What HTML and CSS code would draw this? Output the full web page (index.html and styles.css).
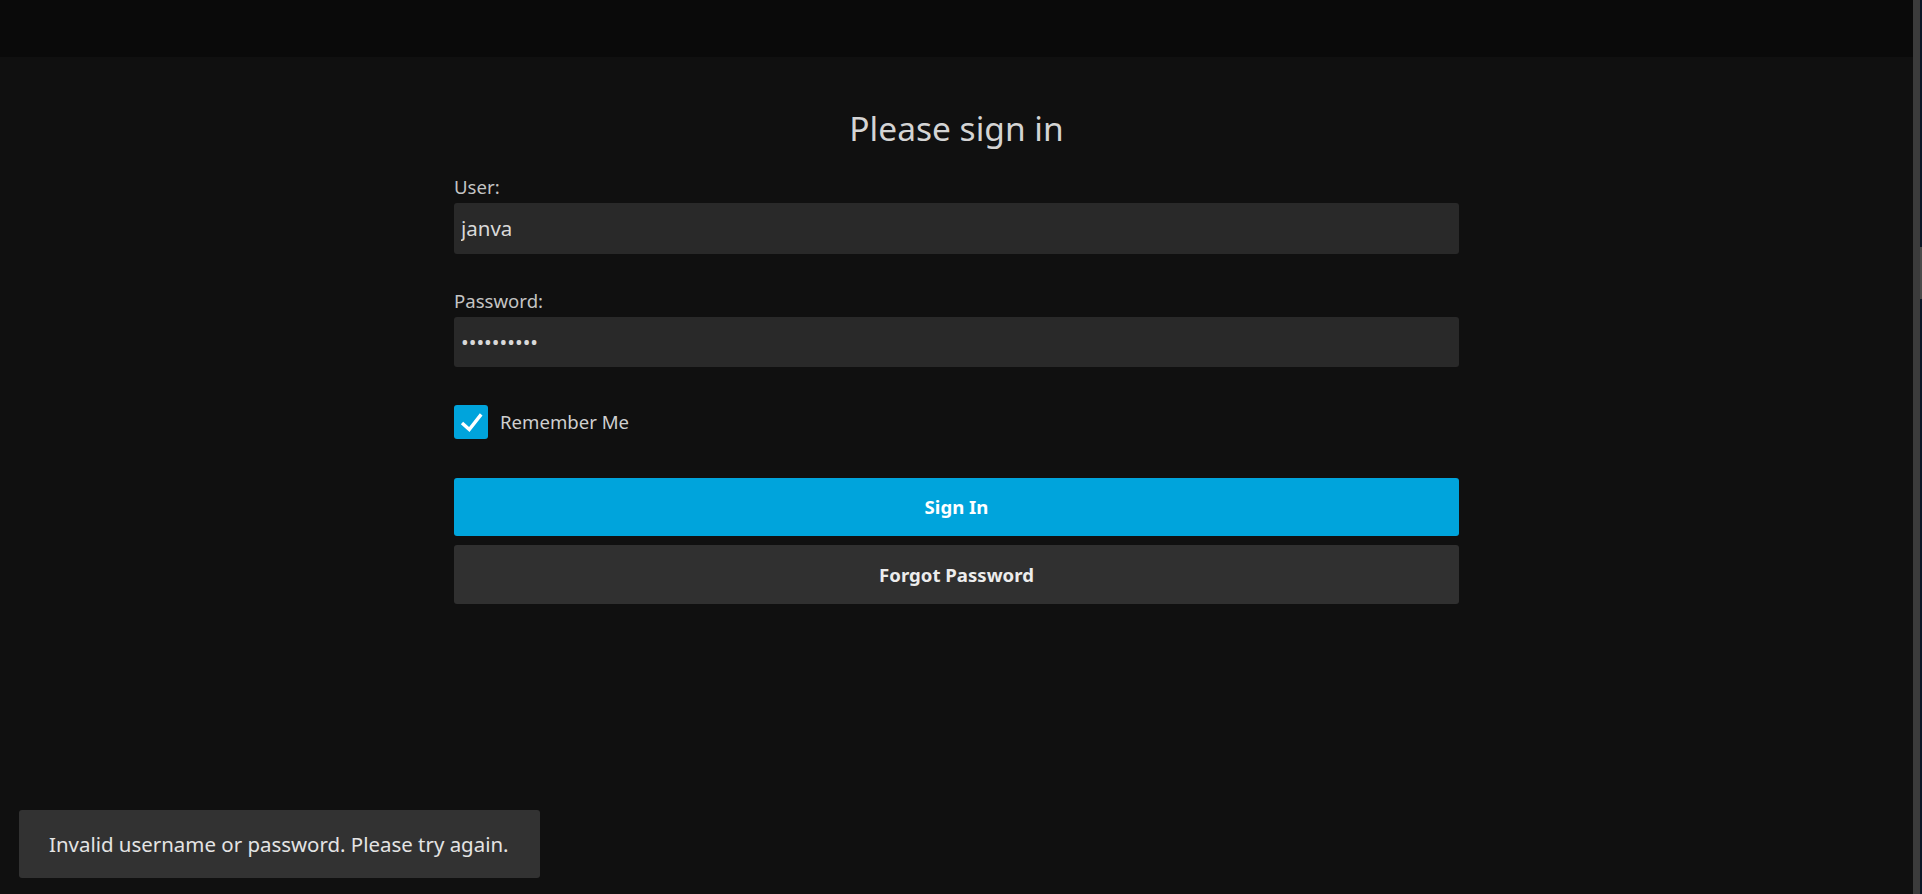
FILE: index.html
```html
<!DOCTYPE html>
<html lang="en">
<head>
<meta charset="utf-8">
<title>Please sign in</title>
<link rel="stylesheet" href="styles.css">
</head>
<body>
<div class="app">
  <div class="page">
    <header class="top-bar"></header>
    <main class="content">
      <form class="login" onsubmit="return false">
        <h1 class="title">Please sign in</h1>
        <div class="field">
          <label class="field-label" for="user">User:</label>
          <input class="field-input" id="user" type="text" value="janva">
        </div>
        <div class="field">
          <label class="field-label" for="pw">Password:</label>
          <input class="field-input" id="pw" type="password" value="abcdefghij">
        </div>
        <label class="remember">
          <span class="check-box">
            <svg viewBox="0 0 34 34" width="34" height="34"><path d="M8 18 L15.3 24.6 L27.2 9.4" fill="none" stroke="#fff" stroke-width="3.4" stroke-linejoin="miter" stroke-linecap="butt"/></svg>
          </span>
          <span class="remember-text">Remember Me</span>
        </label>
        <div class="actions">
          <button class="btn btn-primary" type="submit">Sign In</button>
          <button class="btn btn-secondary" type="button">Forgot Password</button>
        </div>
      </form>
    </main>
    <div class="toast">Invalid username or password. Please try again.</div>
  </div>
  <div class="scroll-track"></div>
  <div class="window-edge"><div class="edge-thumb"></div></div>
</div>
</body>
</html>
```
FILE: styles.css
```css
html, body {
  margin: 0;
  padding: 0;
  height: 100%;
  background: #101010;
  overflow: hidden;
}

body {
  font-family: "Noto Sans", "Open Sans", sans-serif;
  font-size: 18.6px;
  color: #d6d6d6;
}

.app {
  display: flex;
  height: 894px;
}

.page {
  position: relative;
  flex: 1;
  display: flex;
  flex-direction: column;
  min-width: 0;
}

.top-bar {
  height: 57px;
  background: #0a0a0a;
  flex: none;
}

.content {
  flex: 1;
  display: flex;
  justify-content: center;
  padding-top: 48px;
}

.login {
  width: 1005px;
  display: flex;
  flex-direction: column;
}

.title {
  margin: 0 0 23px;
  font-size: 33.5px;
  font-weight: 400;
  line-height: 46px;
  height: 46px;
  text-align: center;
  color: #d4d4d4;
}

.field {
  display: flex;
  flex-direction: column;
  margin-bottom: 34px;
}

.field-label {
  line-height: 25px;
  height: 25px;
  margin-bottom: 4px;
  color: #c4c4c4;
}

.field-input {
  display: block;
  box-sizing: border-box;
  width: 100%;
  height: 50.5px;
  margin: 0;
  padding: 0 7px;
  border: none;
  border-radius: 3px;
  background: #292929;
  color: #d9d9d9;
  font-family: inherit;
  font-size: 20.5px;
  outline: none;
}

.remember {
  display: flex;
  align-items: center;
  gap: 12px;
  margin-top: 3.5px;
  height: 34px;
}

.check-box {
  width: 34px;
  height: 34px;
  border-radius: 3px;
  background: #00a4dc;
  display: flex;
}

.check-box svg {
  display: block;
}

.remember-text {
  color: #cfcfcf;
  line-height: 25px;
}

.actions {
  display: flex;
  flex-direction: column;
  gap: 9px;
  margin-top: 39px;
}

.btn {
  display: block;
  width: 100%;
  height: 58.5px;
  border: none;
  border-radius: 3px;
  font-family: inherit;
  font-size: 18.6px;
  font-weight: 700;
  cursor: pointer;
}

.btn-primary {
  background: #00a4dc;
  color: #ffffff;
}

.btn-secondary {
  background: #303030;
  color: #ececec;
}

.toast {
  position: absolute;
  left: 19px;
  bottom: 16px;
  padding: 20px 31px 20px 30px;
  font-size: 20.46px;
  line-height: 28px;
  background: #323232;
  color: #e4e4e4;
  border-radius: 3px;
}

.scroll-track {
  width: 7px;
  background: #3b3b3b;
  flex: none;
}

.window-edge {
  width: 2px;
  background: #0c1727;
  flex: none;
}

.edge-thumb {
  margin-top: 247px;
  height: 52px;
  background: #4a4a4a;
}
```
